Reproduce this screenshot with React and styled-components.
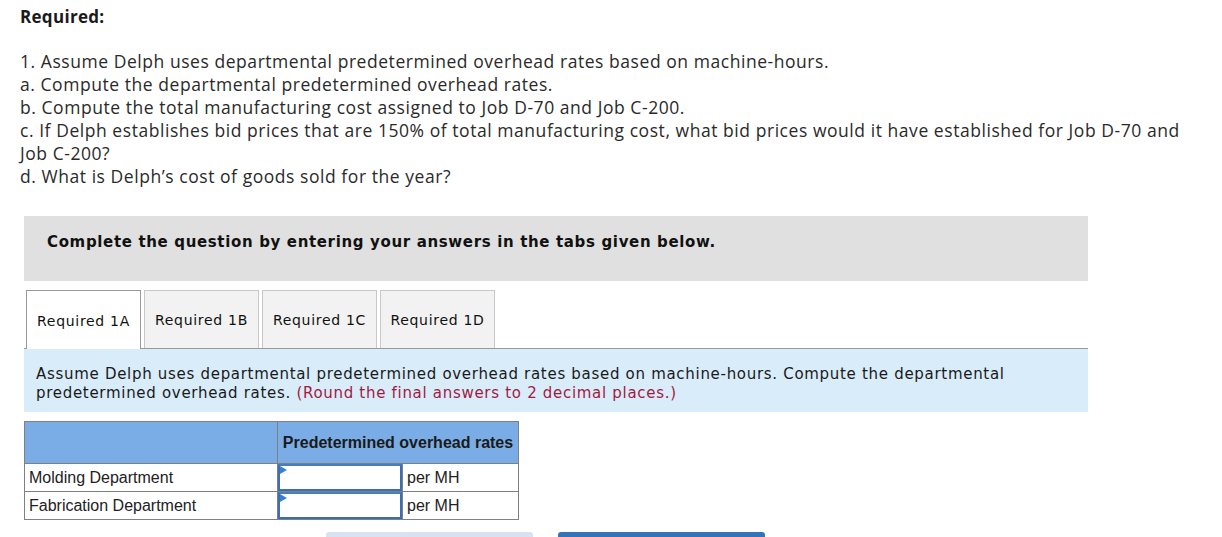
import React from 'react';
import styled, { createGlobalStyle } from 'styled-components';

const GlobalStyle = createGlobalStyle`
  html, body {
    margin: 0;
    padding: 0;
    background: #fff;
  }
`;

const Page = styled.div`
  padding: ${p => (p.$top ? '5px' : '0')} 20px 0 20px;
  font-family: "Open Sans", Lato, sans-serif;
  color: #222;
`;

const Heading = styled.div`
  font-size: 17px;
  font-weight: 700;
  letter-spacing: 0.3px;
  line-height: 23px;
  color: #1a1a1a;
`;

const Questions = styled.div`
  margin-top: 22px;
  width: 1185px;
  font-size: 17.5px;
  letter-spacing: 0.55px;
  line-height: 23px;
  color: #2a2a2a;
`;

const Instruction = styled.div`
  margin: 28px 0 0 4px;
  width: 1064px;
  height: 65px;
  box-sizing: border-box;
  padding: 17px 0 0 23px;
  background: #e0e0e0;
  font-family: "DejaVu Sans", Verdana, sans-serif;
  font-size: 15px;
  line-height: 18px;
  letter-spacing: 0.65px;
  font-weight: 700;
  color: #111;
`;

const Tabs = styled.div`
  margin: 9px 0 0 4px;
  width: 1064px;
  display: flex;
  gap: 3px;
  padding-left: 2px;
  box-sizing: border-box;
  border-bottom: 1px solid #999;
`;

const Tab = styled.div`
  width: 115px;
  box-sizing: border-box;
  display: flex;
  align-items: center;
  justify-content: center;
  padding-top: 1px;
  font-family: "DejaVu Sans", Verdana, sans-serif;
  font-size: 14px;
  letter-spacing: 0.7px;
  color: #111;
  background: ${p => (p.$active ? '#fff' : '#f2f2f2')};
  border: 1px solid ${p => (p.$active ? '#999' : '#c8c8c8')};
  border-bottom: none;
  margin-bottom: ${p => (p.$active ? '-1px' : '0')};
  height: ${p => (p.$active ? '59px' : '58px')};
`;

const Info = styled.div`
  margin-left: 4px;
  width: 1064px;
  box-sizing: border-box;
  padding: 16px 12px 9px 12px;
  background: #d9ecf9;
  font-family: "DejaVu Sans", Verdana, sans-serif;
  font-size: 15px;
  letter-spacing: 0.7px;
  line-height: 19px;
  color: #1a1a1a;
`;

const Hint = styled.span`
  color: #a3193f;
`;

const Table = styled.table`
  margin: 9px 0 0 4px;
  border-collapse: collapse;
  font-family: "Liberation Sans", Arial, sans-serif;
  font-size: 16px;
  color: #222;
`;

const HeadCell = styled.th`
  background: #7aade5;
  border: 1px solid #808080;
  height: 41px;
  padding: 0 4px;
  font-weight: 700;
  text-align: center;
  white-space: nowrap;
  color: #1a1a1a;
  width: ${p => (p.$w ? `${p.$w}px` : 'auto')};
`;

const Cell = styled.td`
  border: 1px solid #808080;
  height: 27px;
  padding: 0 4px;
  width: ${p => p.$w}px;
  white-space: nowrap;
`;

const InputCell = styled.td`
  border: 1px solid #808080;
  padding: 0;
  height: 27px;
  width: 124px;
  position: relative;
`;

const AmountInput = styled.input`
  display: block;
  width: 124px;
  height: 27px;
  box-sizing: border-box;
  border: 2px solid #3b6fb3;
  border-top-color: #4a7dc0;
  margin: 0;
  outline: none;
  background: #fff;
`;

const Marker = styled.span`
  position: absolute;
  left: 2px;
  top: 2px;
  width: 0;
  height: 0;
  border-top: 4px solid transparent;
  border-bottom: 4px solid transparent;
  border-left: 7px solid #3d7fcf;
`;

const Buttons = styled.div`
  margin: 12px 0 0 306px;
  display: flex;
  gap: 25px;
`;

const Button = styled.div`
  width: 207px;
  height: 24px;
  border-radius: 3px 3px 0 0;
  background: ${p => (p.$primary ? '#3573b9' : '#d8e3f1')};
`;

const tabs = ['Required 1A', 'Required 1B', 'Required 1C', 'Required 1D'];
const rows = ['Molding Department', 'Fabrication Department'];

export default function App() {
  return (
    <>
      <GlobalStyle />
      <Page $top>
        <Heading>Required:</Heading>
        <Questions>
          1. Assume Delph uses departmental predetermined overhead rates based on machine-hours.
          <br />
          a. Compute the departmental predetermined overhead rates.
          <br />
          b. Compute the total manufacturing cost assigned to Job D-70 and Job C-200.
          <br />
          c. If Delph establishes bid prices that are 150% of total manufacturing cost, what bid prices would it have established for Job D-70 and Job C-200?
          <br />
          d. What is Delph’s cost of goods sold for the year?
        </Questions>
      </Page>
      <Page>
        <Instruction>Complete the question by entering your answers in the tabs given below.</Instruction>
        <Tabs>
          {tabs.map((t, i) => (
            <Tab key={t} $active={i === 0}>{t}</Tab>
          ))}
        </Tabs>
        <Info>
          Assume Delph uses departmental predetermined overhead rates based on machine-hours. Compute the departmental
          predetermined overhead rates. <Hint>(Round the final answers to 2 decimal places.)</Hint>
        </Info>
        <Table>
          <thead>
            <tr>
              <HeadCell $w={244}></HeadCell>
              <HeadCell colSpan={2}>Predetermined overhead rates</HeadCell>
            </tr>
          </thead>
          <tbody>
            {rows.map(r => (
              <tr key={r}>
                <Cell $w={244}>{r}</Cell>
                <InputCell>
                  <AmountInput type="text" />
                  <Marker />
                </InputCell>
                <Cell $w={107}>per MH</Cell>
              </tr>
            ))}
          </tbody>
        </Table>
        <Buttons>
          <Button />
          <Button $primary />
        </Buttons>
      </Page>
    </>
  );
}
